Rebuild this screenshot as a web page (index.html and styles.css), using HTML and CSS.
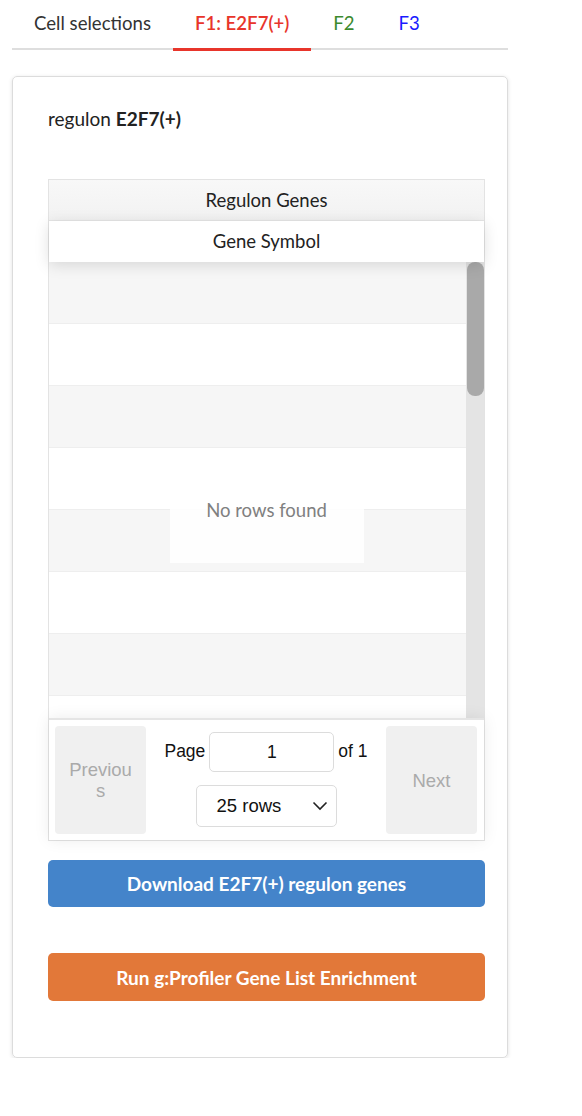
FILE: index.html
```html
<!DOCTYPE html>
<html>
<head>
<meta charset="utf-8">
<link rel="stylesheet" href="styles.css">
</head>
<body>
<nav class="tabs">
  <div class="tab tab-default">Cell selections</div>
  <div class="tab tab-red active">F1: E2F7(+)</div>
  <div class="tab tab-green">F2</div>
  <div class="tab tab-blue">F3</div>
</nav>
<section class="card">
  <div class="title">regulon <b>E2F7(+)</b></div>
  <div class="rtable">
    <div class="group-head">Regulon Genes</div>
    <div class="col-head">Gene Symbol</div>
    <div class="tbody">
      <div class="rows">
        <div class="row odd"></div>
        <div class="row"></div>
        <div class="row odd"></div>
        <div class="row"></div>
        <div class="row odd"></div>
        <div class="row"></div>
        <div class="row odd"></div>
        <div class="row"></div>
      </div>
      <div class="sbar"><div class="sthumb"></div></div>
    </div>
    <div class="pager">
      <button class="pbtn">Previous</button>
      <div class="pcenter">
        <div class="pline">
          <span>Page</span>
          <span class="pinput">1</span>
          <span>of 1</span>
        </div>
        <div class="pselect">
          <span>25 rows</span>
          <svg width="16" height="10" viewBox="0 0 16 10"><path d="M1.5 1.5 L8 8 L14.5 1.5" fill="none" stroke="#222" stroke-width="1.6"/></svg>
        </div>
      </div>
      <button class="pbtn">Next</button>
    </div>
    <div class="nodata">No rows found</div>
  </div>
  <button class="btn btn-blue">Download E2F7(+) regulon genes</button>
  <button class="btn btn-orange">Run g:Profiler Gene List Enrichment</button>
</section>
</body>
</html>
```
FILE: styles.css
```css
* { box-sizing: border-box; }
body {
  margin: 0;
  font-family: Lato, "Open Sans", sans-serif;
  color: #333;
  background: #fff;
}
.tabs {
  display: flex;
  margin-left: 12px;
  width: 496px;
  height: 50px;
  border-bottom: 2px solid #dedede;
}
.tab {
  position: relative;
  padding: 12px 22px 0;
  font-size: 18.6px;
  line-height: 23px;
}
.tab-default { color: #333; }
.tab-red { color: #e8352b; font-weight: 600; }
.tab-green { color: #3c8a2e; }
.tab-blue { color: #1a1aff; }
.active::after {
  content: "";
  position: absolute;
  left: 0;
  right: 0;
  bottom: -3px;
  height: 3px;
  background: #e8352b;
}
.card {
  margin: 26px 0 0 12px;
  width: 496px;
  height: 982px;
  border: 1px solid #dcdcdc;
  border-radius: 5px;
  box-shadow: 0 1px 4px rgba(0,0,0,0.12);
  padding: 32px 22px 0 35px;
}
.title {
  font-size: 19px;
  line-height: 20px;
  color: #222;
}
.title b { font-weight: 700; }
.rtable {
  position: relative;
  margin-top: 50px;
  border: 1px solid #e3e3e3;
  height: 662px;
  display: flex;
  flex-direction: column;
}
.group-head {
  height: 41px;
  line-height: 41px;
  text-align: center;
  font-size: 18.5px;
  color: #222;
  background: linear-gradient(#f8f8f8, #f2f2f2);
  border-bottom: 1px solid #e6e6e6;
}
.col-head {
  position: relative;
  z-index: 1;
  height: 41px;
  line-height: 41px;
  text-align: center;
  font-size: 18.5px;
  color: #222;
  background: #fff;
  box-shadow: 0 3px 15px rgba(0,0,0,0.13);
}
.tbody {
  display: flex;
  height: 456px;
  overflow: hidden;
}
.rows { flex: 1; }
.row {
  height: 62px;
  border-bottom: 1px solid #eeeeee;
  background: #fff;
}
.row.odd { background: #f6f6f6; }
.sbar {
  width: 18px;
  background: #e4e4e4;
  padding: 0 0 0 1px;
}
.sthumb {
  height: 134px;
  background: #a9a9a9;
  border-radius: 8px;
}
.pager {
  flex: 1;
  display: flex;
  align-items: stretch;
  padding: 6px 7px 6px 6px;
  border-top: 2px solid #e5e5e5;
  box-shadow: 0 0 15px rgba(0,0,0,0.08);
  font-family: "Liberation Sans", Arial, sans-serif;
}
.pbtn {
  width: 91px;
  border: none;
  border-radius: 4px;
  background: #f0f0f0;
  color: #aaa;
  font-family: "Liberation Sans", Arial, sans-serif;
  font-size: 18.5px;
  line-height: 21px;
  padding: 0 11px;
  word-break: break-all;
}
.pcenter {
  flex: 1;
  display: flex;
  flex-direction: column;
  align-items: center;
  padding-top: 6px;
}
.pline {
  display: flex;
  align-items: center;
  gap: 4px;
  font-size: 17.5px;
  color: #111;
  line-height: 28px;
}
.pline span:first-child { margin-top: -2px; }
.pline span:last-child { margin-top: -2px; }
.pinput {
  width: 125px;
  height: 40px;
  border: 1px solid #dcdcdc;
  border-radius: 5px;
  text-align: center;
  line-height: 38px;
  font-size: 17.5px;
  color: #111;
}
.pselect {
  margin-top: 13px;
  width: 141px;
  height: 42px;
  border: 1px solid #dcdcdc;
  border-radius: 5px;
  display: flex;
  align-items: center;
  justify-content: space-between;
  padding: 0 8px 0 20px;
  font-size: 18.5px;
  color: #111;
}
.nodata {
  position: absolute;
  left: 50%;
  top: 50%;
  transform: translate(-50%, -50%);
  width: 194px;
  padding: 42px 0;
  text-align: center;
  font-size: 18.5px;
  line-height: 22px;
  color: #808080;
  background: rgba(255,255,255,0.85);
  z-index: 2;
}
.btn {
  display: block;
  width: 437px;
  border: none;
  border-radius: 5px;
  color: #fff;
  font-family: Lato, sans-serif;
  font-weight: 700;
  font-size: 19px;
  cursor: pointer;
}
.btn-blue {
  margin-top: 19px;
  height: 47px;
  background: #4484ca;
}
.btn-orange {
  margin-top: 46px;
  height: 48px;
  background: #e27839;
}
```
